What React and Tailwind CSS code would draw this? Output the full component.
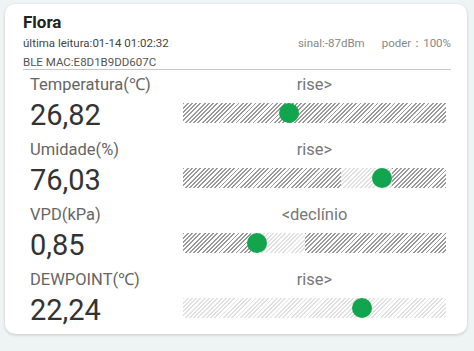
import React from 'react';

const DARK = 'bg-[repeating-linear-gradient(135deg,#9a9a9a_0px,#9a9a9a_1.3px,#ffffff_1.3px,#ffffff_3px)]';
const LIGHT = 'bg-[repeating-linear-gradient(135deg,#e0e0e0_0px,#e0e0e0_1.3px,#ffffff_1.3px,#ffffff_3px)]';

const rows = [
  { label: 'Temperatura(℃)', value: '26,82', trend: 'rise>', range: [0.4, 0.4], dot: 0.403 },
  { label: 'Umidade(%)', value: '76,03', trend: 'rise>', range: [0.6, 0.795], dot: 0.758 },
  { label: 'VPD(kPa)', value: '0,85', trend: '<declínio', range: [0.26, 0.464], dot: 0.282 },
  { label: 'DEWPOINT(℃)', value: '22,24', trend: 'rise>', range: [0, 1], dot: 0.68 },
];

const RangeBar = ({ range, dot }) => {
  const [lo, hi] = range;
  return (
    <div className="relative flex h-[20px] w-full">
      <div className={DARK} style={{ width: `${lo * 100}%` }} />
      <div className={LIGHT} style={{ width: `${(hi - lo) * 100}%` }} />
      <div className={`flex-1 ${DARK}`} />
      <div
        className="absolute top-1/2 h-[20px] w-[20px] -translate-x-1/2 -translate-y-1/2 rounded-full bg-[#12a54d]"
        style={{ left: `${dot * 100}%` }}
      />
    </div>
  );
};

const App = () => {
  return (
    <div className="h-[351px] w-[474px] bg-[#eef3f3] pl-[5px] pt-[4px] font-['Roboto',sans-serif]">
      <div className="h-[330px] w-[462px] rounded-[10px] bg-white pt-[8px] shadow-[0_1px_3px_rgba(0,0,0,0.18)]">
        {/* Header */}
        <div className="pl-[18px] pr-[16px]">
          <div className="text-[17px] font-bold leading-[20px] text-[#222]">Flora</div>
          <div className="mt-[4px] flex items-center justify-between text-[11.5px] leading-[14px]">
            <span className="text-[#444]">última leitura:01-14 01:02:32</span>
            <div className="flex gap-[17px] text-[#888]">
              <span>sinal:-87dBm</span>
              <span>poder：100%</span>
            </div>
          </div>
          <div className="mt-[5px] border-b border-[#c8c8c8] text-[11.5px] leading-[14px] text-[#555]">
            BLE MAC:E8D1B9DD607C
          </div>
        </div>

        {/* Rows */}
        <div className="mt-[2px] pl-[25px] pr-[21px]">
          {rows.map((row) => (
            <div key={row.label} className="flex h-[65px]">
              <div className="w-[153px] shrink-0">
                <div className="text-[16.5px] leading-[25px] text-[#666]">{row.label}</div>
                <div className="text-[29px] leading-[36px] text-[#333]">{row.value}</div>
              </div>
              <div className="flex-1">
                <div className="text-center text-[16.5px] leading-[25px] text-[#777]">{row.trend}</div>
                <div className="mt-[6px]">
                  <RangeBar range={row.range} dot={row.dot} />
                </div>
              </div>
            </div>
          ))}
        </div>
      </div>
    </div>
  );
};

export default App;
